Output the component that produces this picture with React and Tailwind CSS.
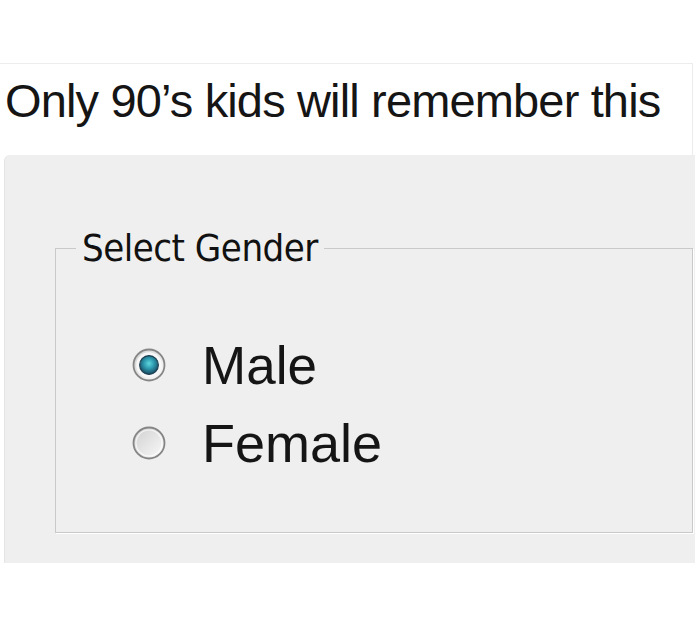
import React from 'react'

function Radio({ checked }) {
  return (
    <svg width="36" height="36" viewBox="0 0 36 36" className="shrink-0">
      <defs>
        <linearGradient id={checked ? 'ringOn' : 'ringOff'} x1="0" y1="0" x2="1" y2="1">
          <stop offset="0" stopColor="#cfcfcf" />
          <stop offset="1" stopColor="#fbfbfb" />
        </linearGradient>
        <radialGradient id="dot" cx="0.5" cy="0.42" r="0.6">
          <stop offset="0" stopColor="#5fd6dc" />
          <stop offset="0.45" stopColor="#2e9bb0" />
          <stop offset="1" stopColor="#163f56" />
        </radialGradient>
      </defs>
      <circle cx="18" cy="18" r="15.5" fill={`url(#${checked ? 'ringOn' : 'ringOff'})`} stroke="#858585" strokeWidth="1.8" />
      {checked ? (
        <>
          <circle cx="18" cy="18" r="12.8" fill="#f7f7f7" />
          <circle cx="18" cy="18" r="9.4" fill="url(#dot)" stroke="#1d3f52" strokeWidth="1.1" />
        </>
      ) : (
        <circle cx="18" cy="18" r="13" fill="none" stroke="#ffffff" strokeWidth="1.2" opacity="0.7" />
      )}
    </svg>
  )
}

export default function App() {
  return (
    <div className="w-[700px] h-[622px] bg-white pt-[63px] overflow-hidden">
      {/* caption card */}
      <div className="w-[693px] h-[92px] border-t border-r border-[#ececec] pt-[13px] pl-[5px]">
        <p
          className="text-[47px] leading-none tracking-[-0.85px] text-[#151515] whitespace-nowrap"
          style={{ fontFamily: '"Liberation Sans", Arial, sans-serif' }}
        >
          Only 90’s kids will remember this
        </p>
      </div>

      {/* dialog panel */}
      <div className="ml-[4px] mr-[5px] h-[408px] bg-[#efefef] border-l border-[#e4e4e4] rounded-tl-[6px] pt-[65px] pl-[50px] pr-[2px]">
        <fieldset className="border border-[#c9c9c9] shadow-[1px_1px_0_#ffffff] pb-[50px]">
          <legend
            className="ml-[20px] px-[6px] text-[38px] tracking-[-0.5px] text-[#111111]"
            style={{ fontFamily: '"DejaVu Sans Condensed", "DejaVu Sans", sans-serif' }}
          >
            Select Gender
          </legend>
          <div className="pt-[49px] pl-[75px] flex flex-col">
            <label className="h-[78px] flex items-center gap-[35px]">
              <Radio checked />
              <span
                className="text-[53px] leading-none text-[#151515]"
                style={{ fontFamily: '"Liberation Sans", Arial, sans-serif' }}
              >
                Male
              </span>
            </label>
            <label className="h-[78px] flex items-center gap-[35px]">
              <Radio />
              <span
                className="text-[54px] leading-none text-[#151515]"
                style={{ fontFamily: '"Liberation Sans", Arial, sans-serif' }}
              >
                Female
              </span>
            </label>
          </div>
        </fieldset>
      </div>
    </div>
  )
}
